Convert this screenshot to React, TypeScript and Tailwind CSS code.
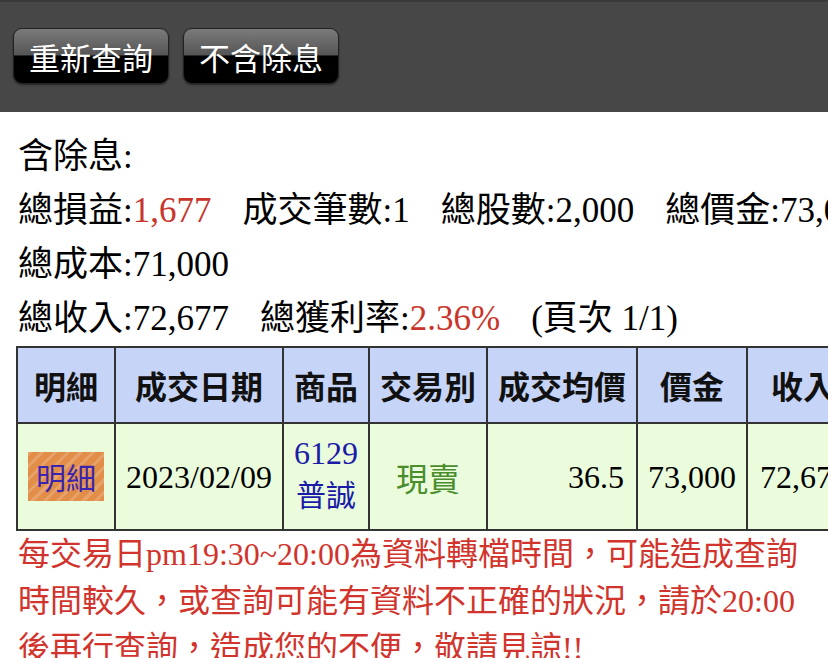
import React from "react";

const serif = "[font-family:'Liberation_Serif','Noto_Sans_CJK_TC',serif]";

function Gap() {
  return <span className="inline-block w-[31px]" />;
}

export default function App() {
  const th =
    "border-2 border-[#333] bg-[#c6d5f7] text-[32px] font-bold text-[#111] text-center align-middle [font-family:'Noto_Sans_CJK_TC',sans-serif]";
  const td = "border-2 border-[#333] bg-[#eafcdc] text-[32px] align-middle";
  const btn =
    "h-[56px] px-[15px] rounded-[9px] border border-[#222] bg-[linear-gradient(to_bottom,#7b7b7b_0%,#555_48%,#000_50%,#000_100%)] text-white text-[31px] leading-none [font-family:'Noto_Sans_CJK_TC',sans-serif] shadow-[0_1px_2px_rgba(0,0,0,0.5)]";
  return (
    <div className="w-[828px] h-[658px] overflow-hidden bg-white">
      <div className="h-[112px] bg-[#474747] border-t-2 border-[#3a3a3a] flex items-start gap-[14px] pl-[13px] pt-[26px]">
        <button className={btn}>重新查詢</button>
        <button className={btn}>不含除息</button>
      </div>

      <div className={`pl-[18px] pt-[18px] text-[35px] leading-[54px] text-black whitespace-nowrap ${serif}`}>
        <div>含除息:</div>
        <div>
          總損益:<span className="text-[#c8352b]">1,677</span>
          <Gap />成交筆數:1<Gap />總股數:2,000<Gap />總價金:73,000
        </div>
        <div>總成本:71,000</div>
        <div>
          總收入:72,677<Gap />總獲利率:<span className="text-[#c8352b]">2.36%</span>
          <Gap />(頁次 1/1)
        </div>
      </div>

      <table className={`ml-[16px] border-collapse table-fixed w-[960px] ${serif}`}>
        <colgroup>
          <col className="w-[98px]" />
          <col className="w-[168px]" />
          <col className="w-[86px]" />
          <col className="w-[118px]" />
          <col className="w-[150px]" />
          <col className="w-[110px]" />
          <col className="w-[112px]" />
          <col className="w-[118px]" />
        </colgroup>
        <thead>
          <tr className="h-[76px]">
            <th className={th}>明細</th>
            <th className={th}>成交日期</th>
            <th className={th}>商品</th>
            <th className={th}>交易別</th>
            <th className={th}>成交均價</th>
            <th className={th}>價金</th>
            <th className={th}>收入</th>
            <th className={th}>損益</th>
          </tr>
        </thead>
        <tbody>
          <tr className="h-[107px]">
            <td className={`${td} text-center`}>
              <span className="inline-flex items-center justify-center w-[76px] h-[49px] bg-[#e28e48] bg-[repeating-linear-gradient(135deg,rgba(255,255,255,0.18)_0px,rgba(255,255,255,0.18)_3px,transparent_3px,transparent_9px)] text-[#3a24b0] text-[30px] [font-family:'Noto_Sans_CJK_TC',sans-serif]">
                明細
              </span>
            </td>
            <td className={`${td} text-center text-black`}>2023/02/09</td>
            <td className={`${td} text-center text-[#1b1ba8] leading-[40px] pb-[8px]`}>
              <div>6129</div>
              <div className="[font-family:'Noto_Sans_CJK_TC',sans-serif] text-[30px]">普誠</div>
            </td>
            <td className={`${td} text-center text-[#4a8d2c] [font-family:'Noto_Sans_CJK_TC',sans-serif] text-[30px]`}>
              現賣
            </td>
            <td className={`${td} text-right pr-[12px] text-black`}>36.5</td>
            <td className={`${td} text-right pr-[10px] text-black`}>73,000</td>
            <td className={`${td} text-right pr-[10px] text-black`}>72,677</td>
            <td className={`${td} text-right pr-[10px] text-[#c8352b]`}>1,677</td>
          </tr>
        </tbody>
      </table>

      <div className={`w-[800px] pl-[18px] text-[32px] leading-[47px] text-[#d1342c] ${serif}`}>
        每交易日pm19:30~20:00為資料轉檔時間，可能造成查詢時間較久，或查詢可能有資料不正確的狀況，請於20:00後再行查詢，造成您的不便，敬請見諒!!
      </div>
    </div>
  );
}
